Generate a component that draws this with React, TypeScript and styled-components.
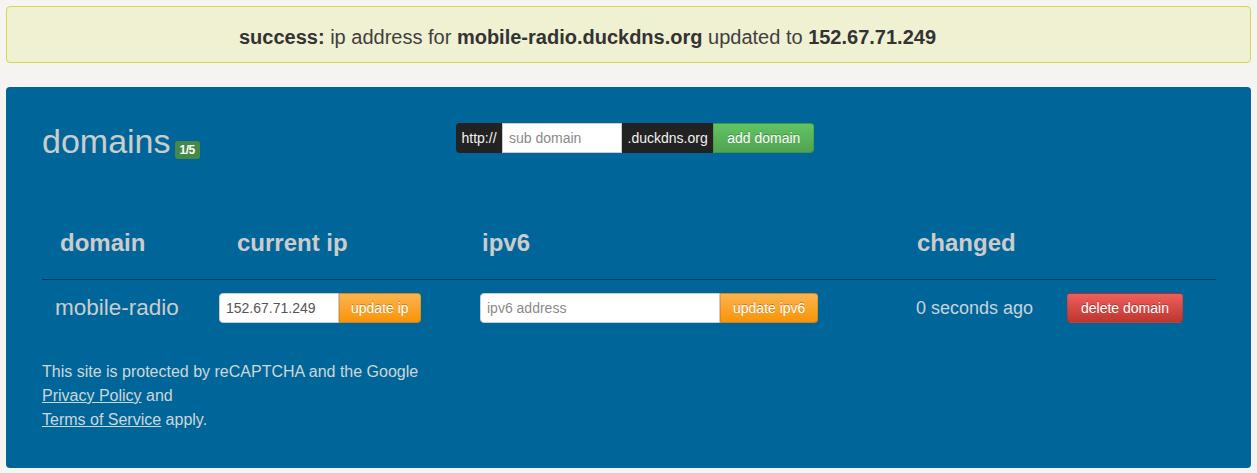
import React from 'react';
import styled, {createGlobalStyle, css} from "styled-components";

const GlobalStyle = createGlobalStyle`
    body {
        margin: 0;
        background: #f5f4f0;
        font-family: "Liberation Sans", Arial, Helvetica, sans-serif;
    }
`

type Variant = "warning" | "success" | "danger"

const gradients: Record<Variant, string> = {
    warning: "linear-gradient(to bottom, #fbb450, #f89406)",
    success: "linear-gradient(to bottom, #62c462, #51a351)",
    danger: "linear-gradient(to bottom, #ee5f5b, #bd362f)",
}

const columns = "164px 261px 436px 151px 1fr"

export default function App() {
    return (
        <Page>
            <GlobalStyle/>
            <Alert>
                <b>success:</b> ip address for <b>mobile-radio.duckdns.org</b> updated to <b>152.67.71.249</b>
            </Alert>

            <Panel>
                <TopBar>
                    <Title>
                        domains<Badge>1/5</Badge>
                    </Title>
                    <InputGroup>
                        <AddOn $side="left">http://</AddOn>
                        <TextInput $width={120} $rounded={false} placeholder="sub domain"/>
                        <AddOn $side="none">.duckdns.org</AddOn>
                        <Button $variant="success" $rounded="right" $pad={13}>add domain</Button>
                    </InputGroup>
                </TopBar>

                <HeaderRow>
                    <HeadCell $indent={18}>domain</HeadCell>
                    <HeadCell $indent={31}>current ip</HeadCell>
                    <HeadCell $indent={15}>ipv6</HeadCell>
                    <HeadCell $indent={14}>changed</HeadCell>
                    <HeadCell $indent={0}></HeadCell>
                </HeaderRow>

                <Row>
                    <DomainName>mobile-radio</DomainName>
                    <Cell>
                        <InputGroup>
                            <TextInput $width={120} $rounded defaultValue="152.67.71.249"/>
                            <Button $variant="warning" $rounded="right" $pad={11}>update ip</Button>
                        </InputGroup>
                    </Cell>
                    <Cell>
                        <InputGroup>
                            <TextInput $width={240} $rounded placeholder="ipv6 address"/>
                            <Button $variant="warning" $rounded="right" $pad={12}>update ipv6</Button>
                        </InputGroup>
                    </Cell>
                    <Changed>0 seconds ago</Changed>
                    <Cell>
                        <Button $variant="danger" $rounded="both" $pad={13}>delete domain</Button>
                    </Cell>
                </Row>

                <Footer>
                    This site is protected by reCAPTCHA and the Google<br/>
                    <FooterLink href="#">Privacy Policy</FooterLink> and<br/>
                    <FooterLink href="#">Terms of Service</FooterLink> apply.
                </Footer>
            </Panel>
        </Page>
    );
}

const Page = styled.div`
    padding: 6px;
`

const Alert = styled.div`
    box-sizing: border-box;
    height: 57px;
    border: 1px solid #d5d84c;
    border-radius: 4px;
    background: #f0f0d2;
    color: #3f3f3f;
    font-size: 20px;
    padding: 6px 82px 0 0;
    line-height: 49px;
    text-align: center;

    b {
        font-weight: 700;
        color: #333;
    }
`

const Panel = styled.section`
    margin-top: 24px;
    height: 381px;
    box-sizing: border-box;
    padding: 36px 35px 36px 36px;
    background: #006699;
    border-radius: 4px;
    color: #cccccc;
`

const TopBar = styled.div`
    display: grid;
    grid-template-columns: 414px auto;
    align-items: start;
    height: 38px;
    margin-bottom: 68px;
`

const Title = styled.h1`
    margin: -1px 0 0;
    font-size: 34px;
    font-weight: 400;
    line-height: 38px;
    color: #cccccc;
`

const Badge = styled.span`
    display: inline-block;
    margin-left: 4px;
    padding: 2px 5px;
    border-radius: 3px;
    background: #468847;
    color: #ffffff;
    font-size: 12px;
    font-weight: 700;
    letter-spacing: -0.5px;
    line-height: 14px;
    vertical-align: -1px;
`

const InputGroup = styled.div`
    display: flex;
    align-items: stretch;
    height: 30px;
`

const AddOn = styled.span<{ $side: "left" | "none" }>`
    display: flex;
    align-items: center;
    padding: 0 5.5px;
    background: #222222;
    color: #f2f2f2;
    font-size: 14px;
    border-radius: ${p => p.$side === "left" ? "4px 0 0 4px" : "0"};
`

const TextInput = styled.input<{ $width: number, $rounded: boolean }>`
    box-sizing: border-box;
    width: ${p => p.$width}px;
    height: 30px;
    margin: 0;
    padding: 0 6px;
    border: 1px solid #cccccc;
    border-radius: ${p => p.$rounded ? "4px 0 0 4px" : "0"};
    background: #ffffff;
    color: #555555;
    font-family: inherit;
    font-size: 14px;
    outline: none;

    &::placeholder {
        color: #8a8a8a;
    }
`

const Button = styled.button<{ $variant: Variant, $rounded: "right" | "both", $pad: number }>`
    box-sizing: border-box;
    height: 30px;
    margin: 0;
    padding: 0 ${p => p.$pad}px;
    border: 1px solid rgba(0, 0, 0, 0.1);
    border-bottom-color: rgba(0, 0, 0, 0.25);
    background: ${p => gradients[p.$variant]};
    color: #ffffff;
    font-family: inherit;
    font-size: 14px;
    text-shadow: 0 -1px 0 rgba(0, 0, 0, 0.25);
    cursor: pointer;
    ${p => p.$rounded === "right"
            ? css`border-radius: 0 4px 4px 0;`
            : css`border-radius: 4px;`}
`

const HeaderRow = styled.div`
    display: grid;
    grid-template-columns: ${columns};
    border-bottom: 1px solid #00345d;
`

const HeadCell = styled.div<{ $indent: number }>`
    padding: 0 0 22px ${p => p.$indent}px;
    font-size: 24px;
    font-weight: 700;
    line-height: 28px;
    color: #cccccc;
`

const Row = styled.div`
    display: grid;
    grid-template-columns: ${columns};
    align-items: center;
    padding-top: 13px;
    margin-bottom: 37px;
`

const Cell = styled.div`
    padding-left: 13px;
    display: flex;
    align-items: center;
`

const DomainName = styled(Cell)`
    font-size: 22.5px;
    color: #cccccc;
`

const Changed = styled(Cell)`
    font-size: 18px;
    color: #cad3da;
`

const Footer = styled.p`
    margin: 1px 0 0;
    font-size: 16px;
    line-height: 24px;
    color: #cfd6db;
`

const FooterLink = styled.a`
    color: inherit;
    text-decoration: underline;
`
